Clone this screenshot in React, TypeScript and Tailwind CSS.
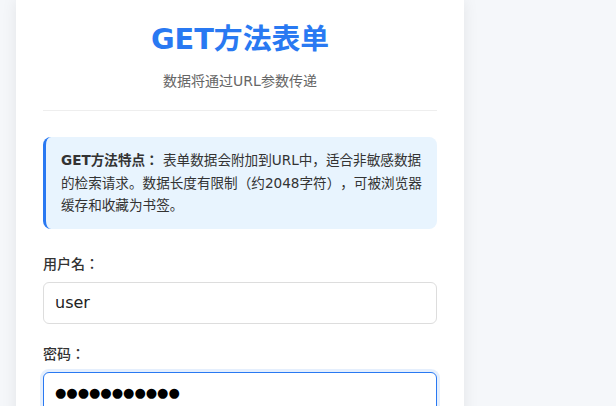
import React from 'react';

export default function App() {
  return (
    <div className="min-h-[406px] bg-[#f5f7fa] pl-4 [font-family:'DejaVu_Sans','Noto_Sans_CJK_JP',sans-serif] [text-spacing-trim:space-all]">
      <div className="w-[448px] bg-white rounded-b-xl shadow-[0_0_16px_rgba(0,0,0,0.08)] px-[27px] pt-[18px] pb-8">
        {/* 标题 */}
        <div className="text-center border-b border-[#eeeeee] pb-[18px] mb-[26px]">
          <h1 className="text-[28.8px] leading-[42px] font-bold text-[#2979f2] mb-[11px]">GET方法表单</h1>
          <p className="text-sm leading-[21px] text-[#666666]">数据将通过URL参数传递</p>
        </div>

        {/* 说明 */}
        <div className="bg-[#e8f4fe] border-l-[3px] border-[#2979f2] rounded-lg px-[15px] py-3 mb-[25px] text-[13.6px] leading-[22.5px] text-[#333333]">
          <strong className="font-bold">GET方法特点：</strong>{' '}
          表单数据会附加到URL中，适合非敏感数据的检索请求。数据长度有限制（约2048字符），可被浏览器缓存和收藏为书签。
        </div>

        <div className="mb-5">
          <label className="block text-sm leading-[21px] font-medium text-[#333333] mb-[7px]">用户名：</label>
          <input
            type="text"
            readOnly
            value="user"
            className="block w-full h-[42px] px-[11px] text-base text-[#222222] border border-[#dddddd] rounded-md outline-none bg-white"
          />
        </div>

        <div className="mb-5">
          <label className="block text-sm leading-[21px] font-medium text-[#333333] mb-[7px]">密码：</label>
          <input
            type="text"
            readOnly
            value="●●●●●●●●●●●"
            className="block w-full h-[42px] px-[11px] text-[13px] text-black border border-[#2979f2] rounded-md outline-none bg-white shadow-[0_0_0_3px_rgba(41,121,242,0.12)]"
          />
        </div>
      </div>
    </div>
  );
}
